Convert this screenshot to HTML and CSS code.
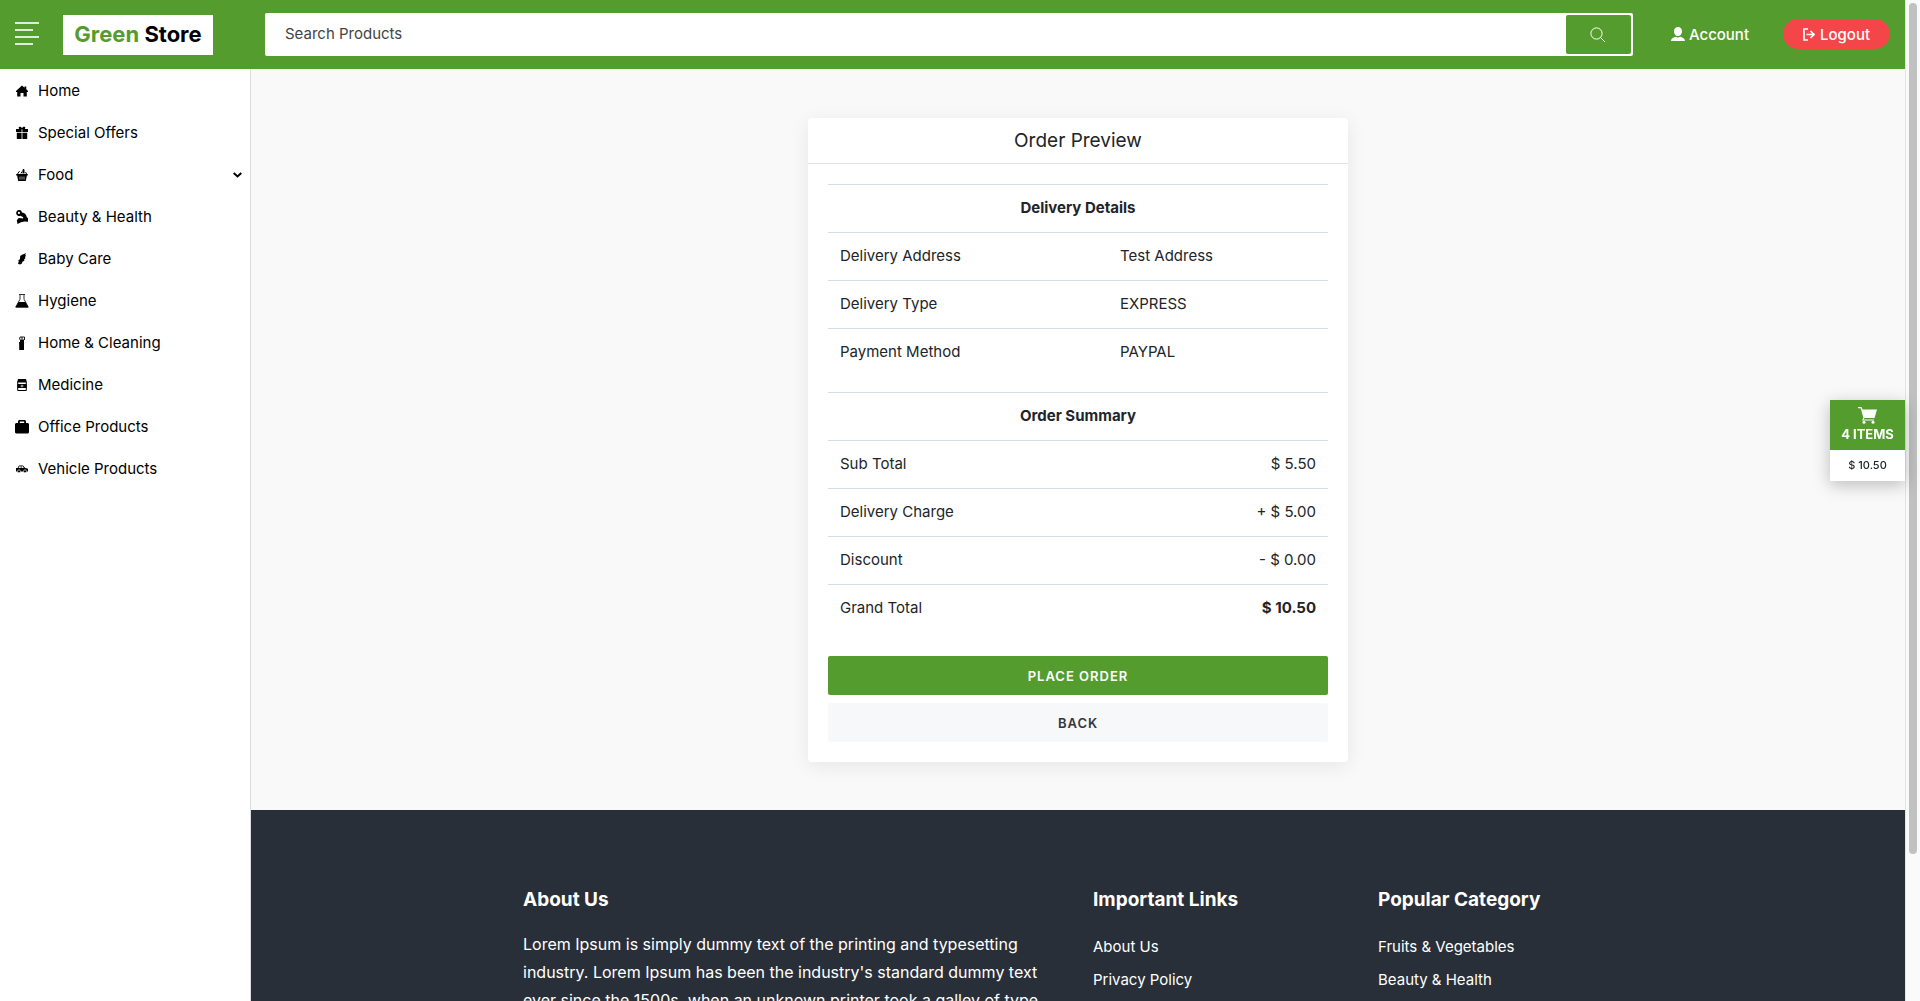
FILE: index.html
```html
<!DOCTYPE html>
<html lang="en">
<head>
    <meta charset="UTF-8">
    <meta name="viewport" content="width=device-width, initial-scale=1.0">
    <title>Green Store</title>
    <link rel="stylesheet" href="styles.css">
</head>
<body>
    <div class="page">
        <header class="header">
            <div class="header-left">
                <button class="menu-toggle" type="button" aria-label="Toggle menu">
                    <span></span>
                    <span class="short"></span>
                    <span></span>
                    <span class="short"></span>
                </button>
                <a class="logo" href="#"><span class="logo-green">Green</span> Store</a>
            </div>
            <form class="search" role="search">
                <input type="text" class="search-input" placeholder="Search Products" aria-label="Search Products">
                <button type="submit" class="search-btn" aria-label="Search">
                    <svg width="16" height="16" viewBox="0 0 16 16" fill="none" stroke="currentColor"><circle cx="6.5" cy="6.5" r="5.6"/><path d="M10.6 10.6 15 15"/></svg>
                </button>
            </form>
            <nav class="user-nav">
                <a class="account" href="#">
                    <svg width="14" height="14" viewBox="0 0 14 14" fill="currentColor"><path d="M7 0c2.500 0 4 1.800 4 4.200S9.500 9 7 9 3 6.600 3 4.200 4.500 0 7 0zM0 14c0-2.200 2-3.400 4.600-4.200 1.500.8 3.300.8 4.800 0C12 10.600 14 11.800 14 14z"/></svg>
                    Account
                </a>
                <button class="logout" type="button">
                    <svg width="12" height="13" viewBox="0 0 12 13" fill="none" stroke="currentColor" stroke-width="1.700"><path d="M5 1H1v11h4M3.500 6.500h7M7.500 3l3.500 3.500L7.500 10"/></svg>
                    Logout
                </button>
            </nav>
        </header>

        <div class="layout">
            <aside class="sidebar">
                <ul class="menu">
                    <li><a href="#"><svg class="icon" viewBox="0 0 14 14"><path d="M7 1.500 9.500 3.700V2.500h1.800v2.800L13 7v1h-1.200v4.500H8.500V9h-3v3.500H2.200V8H1V7z"/></svg>Home</a></li>
                    <li><a href="#"><svg class="icon" viewBox="0 0 14 14"><path d="M1 3h3.200C2.500 1 5.500-.2 7 2.200 8.500-.2 11.500 1 9.800 3H13v3H7.400V3.300h-.8V6H1zM1.800 6.800h4.800V13H1.800zM7.400 6.800h4.800V13H7.400z"/></svg>Special Offers</a></li>
                    <li><a href="#"><svg class="icon" viewBox="0 0 14 14"><path d="M1.200 6h11.600v1.500h-.9L10.800 13H3.200L2.100 7.500h-.9z"/><path d="M2.500 6 4.500 3.200M11.500 6 10.500 4M6 5.500l1-2M8.500 5V1" fill="none" stroke="currentColor"/><path d="M7.500 1.500H9.500V5.500H7.500z"/><path d="M5 8.500v3M7 8.500v3M9 8.500v3" stroke="#fff" stroke-width=".6"/></svg>Food</a><button class="expand" type="button" aria-label="Expand Food"><svg width="9" height="6" viewBox="0 0 9 6" fill="none" stroke="currentColor" stroke-width="2"><path d="m.7 1 3.800 3.500L8.300 1"/></svg></button></li>
                    <li><a href="#"><svg class="icon" viewBox="0 0 14 14"><path d="M4 0a3 3 0 0 1 3 2.400c2.900.3 4.400 2 4.500 4.200L13 8.500v3.200l-3.500-.2L6 12.300 2.500 14l-.7-3.800 2-2.200 4.200.4.300-1.200L5.500 5.700A3 3 0 1 1 4 0z"/><circle cx="3.900" cy="2.900" r="1.100" fill="#fff"/></svg>Beauty &amp; Health</a></li>
                    <li><a href="#"><svg class="icon" viewBox="0 0 14 14"><path d="m11 1-.8 2 .8.800-1 1.300.4 1.200-1.200.9.100 1.600-1.900 1-.5 1.800-2 .9-1.900-.8.700-2-.3-1.500 1.500-1 .3-3.200L7.400 2.500 8.500 2.200z"/></svg>Baby Care</a></li>
                    <li><a href="#"><svg class="icon" viewBox="0 0 14 14"><path d="M4 .5h6M5 .8v4.400L.8 13h12.400L9 5.200V.8" fill="none" stroke="currentColor" stroke-width=".8"/><path d="M3.500 8h7l3 5.600H.5z"/></svg>Hygiene</a></li>
                    <li><a href="#"><svg class="icon" viewBox="0 0 14 14"><path d="M4 6h5v8H4.200V8z"/><path d="M5 3.500h4V6H5z"/><path d="M4.500 3.500 5 1h4.500v3M7 1v2.500" fill="none" stroke="currentColor" stroke-width=".9"/></svg>Home &amp; Cleaning</a></li>
                    <li><a href="#"><svg class="icon" viewBox="0 0 14 14"><path d="M3 1h8l.8 3H2.200z"/><path d="M2.700 4h8.600v8.500H2.700z" fill="none" stroke="currentColor"/><path d="M2.500 6h9v4h-9z"/><path d="M5.500 8h3M7 6.700v2.600" stroke="#fff" stroke-width=".7"/></svg>Medicine</a></li>
                    <li><a href="#"><svg class="icon" viewBox="0 0 14 14"><path d="M4 0h6l1 1v2h2l1 1v8.500l-1 1H1l-1-1V4l1-1h2V1zm.8 1.500V3h4.400V1.500z"/></svg>Office Products</a></li>
                    <li><a href="#"><svg class="icon" viewBox="0 0 14 14"><path d="M1 6h1.500L4 3.500h4L10.200 6l2.800.8V9.500H1z"/><path d="M4.400 4.300h1.300V6H3.500zM6.500 4.300h1.200L8.800 6H6.500z" fill="#fff"/><circle cx="4" cy="9.300" r="1.500" stroke="#fff" stroke-width=".6"/><circle cx="10" cy="9.300" r="1.500" stroke="#fff" stroke-width=".6"/></svg>Vehicle Products</a></li>
                </ul>
            </aside>

            <div class="content">
                <main class="main">
                    <section class="card">
                        <h1 class="card-title">Order Preview</h1>
                        <div class="card-body">
                            <table class="details">
                                <colgroup>
                                    <col class="col-label">
                                    <col>
                                </colgroup>
                                <thead>
                                    <tr><th colspan="2">Delivery Details</th></tr>
                                </thead>
                                <tbody>
                                    <tr><td>Delivery Address</td><td>Test Address</td></tr>
                                    <tr><td>Delivery Type</td><td>EXPRESS</td></tr>
                                    <tr><td>Payment Method</td><td>PAYPAL</td></tr>
                                </tbody>
                            </table>
                            <table class="details summary">
                                <thead>
                                    <tr><th colspan="2">Order Summary</th></tr>
                                </thead>
                                <tbody>
                                    <tr><td>Sub Total</td><td>$ 5.50</td></tr>
                                    <tr><td>Delivery Charge</td><td>+ $ 5.00</td></tr>
                                    <tr><td>Discount</td><td>- $ 0.00</td></tr>
                                    <tr><td>Grand Total</td><td><b>$ 10.50</b></td></tr>
                                </tbody>
                            </table>
                            <div class="actions">
                                <button class="btn btn-primary" type="button">Place Order</button>
                                <button class="btn btn-light" type="button">Back</button>
                            </div>
                        </div>
                    </section>
                </main>

                <footer class="footer">
                    <div class="footer-inner">
                        <div class="footer-col">
                            <h2>About Us</h2>
                            <p>Lorem Ipsum is simply dummy text of the printing and typesetting industry. Lorem Ipsum has been the industry's standard dummy text ever since the 1500s, when an unknown printer took a galley of type</p>
                        </div>
                        <div class="footer-col">
                            <h2>Important Links</h2>
                            <ul>
                                <li><a href="#">About Us</a></li>
                                <li><a href="#">Privacy Policy</a></li>
                            </ul>
                        </div>
                        <div class="footer-col">
                            <h2>Popular Category</h2>
                            <ul>
                                <li><a href="#">Fruits &amp; Vegetables</a></li>
                                <li><a href="#">Beauty &amp; Health</a></li>
                            </ul>
                        </div>
                    </div>
                </footer>
            </div>
        </div>
    </div>

    <div class="scroll-track">
        <div class="scroll-thumb"></div>
    </div>

    <button class="cart" type="button">
        <span class="cart-top">
            <svg width="20" height="17" viewBox="0 0 20 17" fill="currentColor"><path d="M0 0h3.500l1 2.500H19L16.500 11H6.300l-.6 1.500H16v1H4.200L5.300 10.500 2.700 1.300H0z"/><circle cx="6" cy="15.200" r="1.500"/><circle cx="15" cy="15.200" r="1.500"/></svg>
            <span>4 ITEMS</span>
        </span>
        <span class="cart-total">$ 10.50</span>
    </button>
</body>
</html>
```
FILE: styles.css
```css
* {
    box-sizing: border-box;
}
body {
    display: flex;
    height: 100vh;
    margin: 0;
    font-family: Inter, "Liberation Sans", sans-serif;
    font-size: 15px;
    color: #212529;
    background-color: #f9f9f9;
}
a {
    color: inherit;
    text-decoration: none;
}
ul {
    list-style: none;
    margin: 0;
    padding: 0;
}
button {
    font-family: inherit;
    border: none;
    padding: 0;
    cursor: pointer;
}
.page {
    flex: 1;
    overflow-y: auto;
    scrollbar-width: none;
}
.scroll-track {
    width: 15px;
    padding: 3px 3px 3px 3px;
    background-color: #fafafa;
    border-left: 1px solid #e4e4e4;
}
.scroll-thumb {
    width: 8px;
    height: 85.5%;
    background-color: #c1c1c1;
    border-radius: 4px;
}

/* header */
.header {
    position: sticky;
    top: 0;
    z-index: 10;
    display: flex;
    align-items: center;
    height: 69px;
    padding: 0 15px;
    background-color: #559c2e;
}
.header-left {
    display: flex;
    align-items: center;
    gap: 24px;
    width: 250px;
}
.menu-toggle {
    display: flex;
    flex-direction: column;
    gap: 5px;
    width: 24px;
    margin-bottom: 2px;
    background: transparent;
}
.menu-toggle span {
    width: 24px;
    height: 2px;
    background-color: #dfeed8;
}
.menu-toggle .short {
    width: 18px;
}
.logo {
    width: 150px;
    height: 40px;
    line-height: 39px;
    background-color: #fff;
    color: #000;
    font-size: 22px;
    font-weight: 700;
    text-align: center;
}
.logo-green {
    color: #559c2e;
}
.search {
    display: flex;
    flex: 1;
    height: 43px;
    padding: 2px;
    background-color: #fff;
    border-radius: 2px;
}
.search-input {
    flex: 1;
    padding: 0 18px 2px;
    border: none;
    outline: none;
    background: transparent;
    font-family: inherit;
    font-size: 15px;
}
.search-input::placeholder {
    color: #444;
}
.search-btn {
    display: flex;
    align-items: center;
    justify-content: center;
    width: 65px;
    background-color: #559c2e;
    border-radius: 2px;
    color: #fff;
}
.user-nav {
    display: flex;
    align-items: center;
    gap: 34px;
    padding: 0 0 1px 38px;
    color: #fff;
    font-weight: 500;
}
.account {
    display: flex;
    align-items: center;
    gap: 4px;
}
.logout {
    display: flex;
    align-items: center;
    justify-content: center;
    gap: 5px;
    width: 107px;
    height: 30px;
    border-radius: 15px;
    background-color: #f44649;
    color: #fff;
    font-size: 15px;
    font-weight: 500;
}

/* sidebar */
.layout {
    display: flex;
}
.sidebar {
    position: sticky;
    top: 69px;
    width: 251px;
    height: calc(100vh - 69px);
    background-color: #fff;
    border-right: 1px solid #ddd;
}
.menu li {
    display: flex;
    align-items: center;
    justify-content: space-between;
    height: 42px;
    padding: 1px 8px 0 15px;
    color: #000;
}
.menu a {
    display: flex;
    align-items: center;
    gap: 9px;
}
.icon {
    width: 14px;
    height: 14px;
    fill: currentColor;
}
.expand {
    display: flex;
    background: transparent;
    color: #000;
}

/* order card */
.content {
    flex: 1;
}
.main {
    padding: 49px 20px 48px;
}
.card {
    max-width: 540px;
    margin: 0 auto;
    background-color: #fff;
    border-radius: 4px;
    box-shadow: 0 4px 20px rgba(0, 0, 0, 0.08);
}
.card-title {
    margin: 0;
    height: 46px;
    line-height: 45px;
    border-bottom: 1px solid #e4e4e4;
    font-size: 19px;
    font-weight: 400;
    text-align: center;
}
.card-body {
    padding: 20px;
}
.details {
    width: 100%;
    margin-bottom: 15px;
    border-collapse: collapse;
    table-layout: fixed;
}
.col-label {
    width: 56%;
}
.details th,
.details td {
    height: 48px;
    padding: 0 12px 2px;
    border-top: 1px solid #d5dce2;
    text-align: left;
}
.details th {
    font-weight: 700;
    text-align: center;
}
.summary td:last-child {
    text-align: right;
}
.actions {
    display: flex;
    flex-direction: column;
    gap: 8px;
    padding-top: 9px;
}
.btn {
    height: 39px;
    border-radius: 2px;
    font-size: 13px;
    font-weight: 600;
    letter-spacing: 1px;
    text-transform: uppercase;
}
.btn-primary {
    background-color: #559c2e;
    color: #fff;
}
.btn-light {
    background-color: #f7f8fa;
    color: #31373d;
}

/* footer */
.footer {
    min-height: 360px;
    padding-top: 76px;
    background-color: #292f38;
    color: #fff;
}
.footer-inner {
    display: grid;
    grid-template-columns: 2fr 1fr 1fr;
    max-width: 1140px;
    margin: 0 auto;
}
.footer-col {
    padding: 0 15px;
}
.footer h2 {
    margin: 0 0 16px;
    font-size: 19px;
    line-height: 28px;
    font-weight: 700;
}
.footer p {
    margin: 0;
    font-size: 16px;
    line-height: 28px;
}
.footer li {
    line-height: 33px;
}

/* floating cart */
.cart {
    position: fixed;
    top: 400px;
    right: 15px;
    width: 75px;
    background-color: #fff;
    color: #212529;
    box-shadow: 0 4px 16px rgba(0, 0, 0, 0.25);
}
.cart-top {
    display: flex;
    flex-direction: column;
    align-items: center;
    gap: 2px;
    height: 50px;
    padding-top: 7px;
    background-color: #559c2e;
    color: #fff;
    font-size: 13px;
    font-weight: 700;
}
.cart-total {
    display: block;
    line-height: 31px;
    font-size: 11px;
    font-weight: 500;
}
```
